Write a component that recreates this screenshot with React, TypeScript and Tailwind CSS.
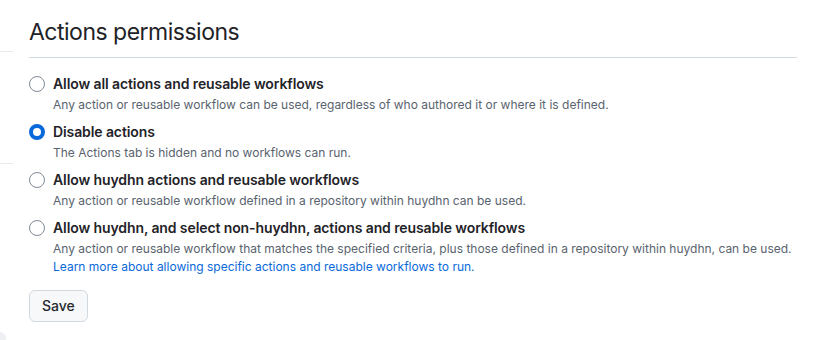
import React, { useState } from 'react';

const options = [
  {
    id: 'all',
    label: 'Allow all actions and reusable workflows',
    note: 'Any action or reusable workflow can be used, regardless of who authored it or where it is defined.',
  },
  {
    id: 'disable',
    label: 'Disable actions',
    note: 'The Actions tab is hidden and no workflows can run.',
  },
  {
    id: 'local',
    label: 'Allow huydhn actions and reusable workflows',
    note: 'Any action or reusable workflow defined in a repository within huydhn can be used.',
  },
  {
    id: 'select',
    label: 'Allow huydhn, and select non-huydhn, actions and reusable workflows',
    note: 'Any action or reusable workflow that matches the specified criteria, plus those defined in a repository within huydhn, can be used.',
    link: 'Learn more about allowing specific actions and reusable workflows to run.',
  },
];

function Radio({ checked }: { checked: boolean }) {
  return checked ? (
    <span className="w-4 h-4 shrink-0 rounded-full border-[4.5px] border-[#0969da] bg-white" />
  ) : (
    <span className="w-4 h-4 shrink-0 rounded-full border border-[#818b98] bg-white" />
  );
}

export default function App() {
  const [value, setValue] = useState('disable');

  return (
    <div
      className="flex w-[818px] h-[340px] bg-white overflow-hidden text-[#1f2328]"
      style={{ fontFamily: 'Inter, "Noto Sans", sans-serif' }}
    >
      <aside className="w-[13px] shrink-0 flex flex-col">
        <div className="h-[52px] border-b border-[#e8ebef]" />
        <div className="h-[112px] border-b border-[#e8ebef]" />
        <div className="flex-1" />
        <div className="w-[6px] h-[14px] -mb-[6px] rounded-r-full bg-[#eef0f3]" />
      </aside>

      <main className="flex-1 pl-4 pr-[21px] pt-[14px]">
        <h2 className="text-[23px] leading-9 font-normal tracking-[-0.5px] pb-[7px] border-b border-[#d1d9e0]">
          Actions permissions
        </h2>

        <div className="mt-4 flex flex-col gap-2">
          {options.map((o) => (
            <label key={o.id} className="flex flex-col cursor-pointer" onClick={() => setValue(o.id)}>
              <span className="flex items-center gap-2 h-5">
                <Radio checked={value === o.id} />
                <span className="text-sm font-semibold leading-5 tracking-[-0.1px]">{o.label}</span>
              </span>
              <span className="pl-6 mt-0.5 text-xs leading-[18px] text-[#59636e]">{o.note}</span>
              {o.link && (
                <a href="#" className="pl-6 text-xs leading-[18px] text-[#0969da]">
                  {o.link}
                </a>
              )}
            </label>
          ))}
        </div>

        <button className="mt-[14px] h-8 px-3 rounded-md border border-[#d1d9e0] bg-[#f6f8fa] text-sm font-medium text-[#25292e]">
          Save
        </button>
      </main>
    </div>
  );
}
